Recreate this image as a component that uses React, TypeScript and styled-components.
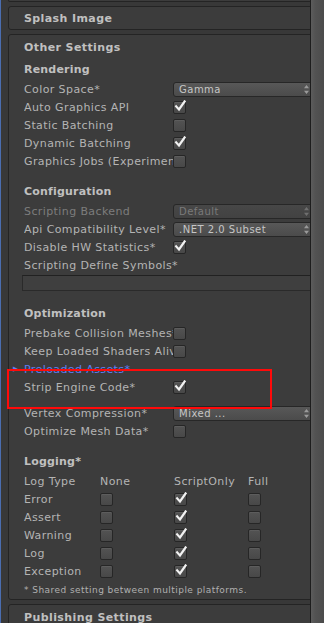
import React from "react";
import styled, { createGlobalStyle } from "styled-components";

const GlobalStyle = createGlobalStyle`
  html, body {
    margin: 0;
    padding: 0;
    background: #383838;
    font-family: "DejaVu Sans", "Liberation Sans", sans-serif;
  }
`;

type LogLevel = { name: string; none: boolean; script: boolean; full: boolean };

const logLevels: LogLevel[] = [
  { name: "Error", none: false, script: true, full: false },
  { name: "Assert", none: false, script: true, full: false },
  { name: "Warning", none: false, script: true, full: false },
  { name: "Log", none: false, script: true, full: false },
  { name: "Exception", none: false, script: true, full: false },
];

const CheckMark = () => (
  <svg width="13" height="12" viewBox="0 0 13 12">
    <path
      d="M2.2 6.4 L5 9.4 L10.6 1.4"
      fill="none"
      stroke="#f2f2f2"
      strokeWidth="2.2"
      strokeLinecap="square"
    />
  </svg>
);

const Checkbox = ({ checked }: { checked?: boolean }) => (
  <Box12>{checked && <CheckMark />}</Box12>
);

const PopupArrows = () => (
  <svg width="5" height="9" viewBox="0 0 5 9">
    <path d="M2.5 0 L5 3.2 L0 3.2 Z M2.5 9 L5 5.8 L0 5.8 Z" fill="#9a9a9a" />
  </svg>
);

const Dropdown = ({ value, disabled }: { value: string; disabled?: boolean }) => (
  <Popup $disabled={disabled}>
    <span>{value}</span>
    <PopupArrows />
  </Popup>
);

const CheckRow = ({ label, checked }: { label: string; checked?: boolean }) => (
  <Row>
    <Label>{label}</Label>
    <Checkbox checked={checked} />
  </Row>
);

const DropRow = ({
  label,
  value,
  disabled,
}: {
  label: string;
  value: string;
  disabled?: boolean;
}) => (
  <Row>
    <Label $disabled={disabled}>{label}</Label>
    <Dropdown value={value} disabled={disabled} />
  </Row>
);

export default function App() {
  return (
    <Root>
      <GlobalStyle />
      <Main>
        <TopStub />
        <Section>
          <SectionTitle $height={22}>Splash Image</SectionTitle>
        </Section>

        <Section>
          <SectionTitle $height={24}>Other Settings</SectionTitle>
          <Body>
            <SubHeader>Rendering</SubHeader>
            <DropRow label="Color Space*" value="Gamma" />
            <CheckRow label="Auto Graphics API" checked />
            <CheckRow label="Static Batching" />
            <CheckRow label="Dynamic Batching" checked />
            <CheckRow label="Graphics Jobs (Experimental)" />

            <SubHeader $gap={11}>Configuration</SubHeader>
            <DropRow label="Scripting Backend" value="Default" disabled />
            <DropRow label="Api Compatibility Level*" value=".NET 2.0 Subset" />
            <CheckRow label="Disable HW Statistics*" checked />
            <Row>
              <Label $wide>Scripting Define Symbols*</Label>
            </Row>
            <TextField />

            <SubHeader $gap={12}>Optimization</SubHeader>
            <CheckRow label="Prebake Collision Meshes*" />
            <CheckRow label="Keep Loaded Shaders Alive*" />
            <Highlighted>
              <Row>
                <FoldArrow>▶</FoldArrow>
                <LinkLabel>Preloaded Assets*</LinkLabel>
              </Row>
              <CheckRow label="Strip Engine Code*" checked />
              <RedFrame />
            </Highlighted>
            <DropRow label="Vertex Compression*" value="Mixed ..." />
            <CheckRow label="Optimize Mesh Data*" />

            <SubHeader $gap={11}>Logging*</SubHeader>
            <LogGrid>
              <LogCell>Log Type</LogCell>
              <LogCell>None</LogCell>
              <LogCell>ScriptOnly</LogCell>
              <LogCell>Full</LogCell>
              {logLevels.map((l) => (
                <React.Fragment key={l.name}>
                  <LogCell>{l.name}</LogCell>
                  <LogCell>
                    <Checkbox checked={l.none} />
                  </LogCell>
                  <LogCell>
                    <Checkbox checked={l.script} />
                  </LogCell>
                  <LogCell>
                    <Checkbox checked={l.full} />
                  </LogCell>
                </React.Fragment>
              ))}
            </LogGrid>
            <Footnote>* Shared setting between multiple platforms.</Footnote>
          </Body>
        </Section>

        <Section>
          <SectionTitle $height={24}>Publishing Settings</SectionTitle>
        </Section>
      </Main>
      <ScrollBar />
    </Root>
  );
}

const Root = styled.div`
  display: flex;
  height: 623px;
  overflow: hidden;
  border-left: 1px solid #4a6db0;
  background: #383838;
`;

const Main = styled.div`
  flex: 1;
  min-width: 0;
  overflow: hidden;
  padding-left: 7px;
`;

const ScrollBar = styled.div`
  width: 13px;
  flex: none;
  border-left: 1px solid #1d1d1d;
  background: linear-gradient(to right, #5c5c5c, #525252 35%, #4b4b4b);
`;

const TopStub = styled.div`
  height: 1px;
  margin-right: -6px;
  margin-bottom: 4px;
  border: 1px solid #242424;
  border-top: none;
  border-radius: 0 0 3px 3px;
  background: #3c3c3c;
`;

const Section = styled.div`
  margin-right: -6px;
  margin-bottom: 4px;
  border: 1px solid #242424;
  border-radius: 3px;
  background: #3c3c3c;
`;

const SectionTitle = styled.div<{ $height: number }>`
  height: ${(p) => p.$height}px;
  display: flex;
  align-items: center;
  padding-left: 15px;
  font-size: 11px;
  font-weight: bold;
  letter-spacing: 0.4px;
  color: #c0c0c0;
`;

const Body = styled.div`
  padding: 0 2px 0 15px;
`;

const SubHeader = styled.div<{ $gap?: number }>`
  height: 20px;
  margin-top: ${(p) => p.$gap ?? 0}px;
  margin-bottom: 1px;
  display: flex;
  align-items: center;
  font-size: 11px;
  font-weight: bold;
  letter-spacing: 0.2px;
  color: #c0c0c0;
`;

const Row = styled.div`
  height: 18px;
  display: flex;
  align-items: center;
`;

const Label = styled.div<{ $disabled?: boolean; $wide?: boolean }>`
  width: ${(p) => (p.$wide ? "auto" : "149px")};
  flex: none;
  overflow: hidden;
  white-space: nowrap;
  font-size: 11px;
  letter-spacing: 0.4px;
  color: ${(p) => (p.$disabled ? "#7c7c7c" : "#b4b4b4")};
`;

const LinkLabel = styled.div`
  font-size: 11px;
  letter-spacing: 0.4px;
  color: #5f7df7;
  white-space: nowrap;
`;

const FoldArrow = styled.span`
  width: 11px;
  margin-left: -11px;
  font-size: 7px;
  color: #5f7df7;
`;

const Box12 = styled.div`
  position: relative;
  width: 11px;
  height: 11px;
  flex: none;
  border: 1px solid #262626;
  border-radius: 2px;
  background: linear-gradient(#535353, #484848);
  box-shadow: inset 0 1px 0 rgba(255, 255, 255, 0.06);

  svg {
    position: absolute;
    left: 0;
    top: -2px;
  }
`;

const Popup = styled.div<{ $disabled?: boolean }>`
  flex: 1;
  height: 13px;
  display: flex;
  align-items: center;
  justify-content: space-between;
  padding: 0 3px 0 5px;
  border: 1px solid #272727;
  border-radius: 3px;
  background: ${(p) =>
    p.$disabled
      ? "linear-gradient(#474747, #424242)"
      : "linear-gradient(#585858, #4b4b4b)"};
  font-size: 10px;
  letter-spacing: 0.5px;
  color: ${(p) => (p.$disabled ? "#7a7a7a" : "#c6c6c6")};
  white-space: nowrap;

  svg {
    opacity: ${(p) => (p.$disabled ? 0.5 : 1)};
  }
`;

const TextField = styled.div`
  height: 14px;
  margin: 1px 0 0 -2px;
  border: 1px solid #2a2a2a;
  border-top-color: #212121;
  background: #3f3f3f;
`;

const Highlighted = styled.div`
  position: relative;
  margin-bottom: 8px;
`;

const RedFrame = styled.div`
  position: absolute;
  left: -17px;
  top: 9px;
  width: 265px;
  height: 40px;
  box-sizing: border-box;
  border: 2px solid #ff0a0a;
  z-index: 2;
`;

const LogGrid = styled.div`
  display: grid;
  grid-template-columns: 76px 74px 74px 1fr;
  grid-auto-rows: 18px;
`;

const LogCell = styled.div`
  display: flex;
  align-items: center;
  font-size: 11px;
  letter-spacing: 0.4px;
  color: #b4b4b4;
  white-space: nowrap;
`;

const Footnote = styled.div`
  height: 19px;
  display: flex;
  align-items: center;
  font-size: 9px;
  letter-spacing: 0.45px;
  color: #b0b0b0;
  white-space: nowrap;
`;
